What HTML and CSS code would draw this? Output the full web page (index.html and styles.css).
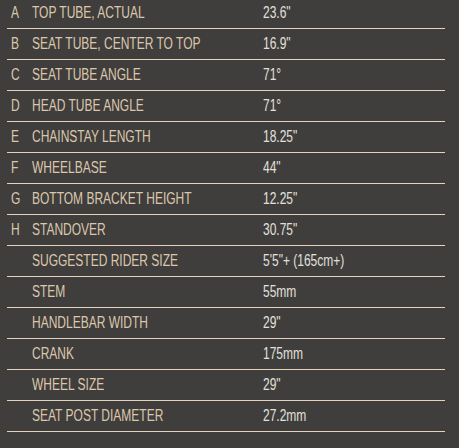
FILE: index.html
```html
<!DOCTYPE html>
<html>
<head>
<meta charset="utf-8">
<link rel="stylesheet" href="styles.css">
</head>
<body>
<div class="specs">
  <div class="row"><span class="key">A</span><span class="label">TOP TUBE, ACTUAL</span><span class="value">23.6"</span></div>
  <div class="row"><span class="key">B</span><span class="label">SEAT TUBE, CENTER TO TOP</span><span class="value">16.9"</span></div>
  <div class="row"><span class="key">C</span><span class="label">SEAT TUBE ANGLE</span><span class="value">71°</span></div>
  <div class="row"><span class="key">D</span><span class="label">HEAD TUBE ANGLE</span><span class="value">71°</span></div>
  <div class="row"><span class="key">E</span><span class="label">CHAINSTAY LENGTH</span><span class="value">18.25"</span></div>
  <div class="row"><span class="key">F</span><span class="label">WHEELBASE</span><span class="value">44"</span></div>
  <div class="row"><span class="key">G</span><span class="label">BOTTOM BRACKET HEIGHT</span><span class="value">12.25"</span></div>
  <div class="row"><span class="key">H</span><span class="label">STANDOVER</span><span class="value">30.75"</span></div>
  <div class="row"><span class="key"></span><span class="label">SUGGESTED RIDER SIZE</span><span class="value">5'5"+ (165cm+)</span></div>
  <div class="row"><span class="key"></span><span class="label">STEM</span><span class="value">55mm</span></div>
  <div class="row"><span class="key"></span><span class="label">HANDLEBAR WIDTH</span><span class="value">29"</span></div>
  <div class="row"><span class="key"></span><span class="label">CRANK</span><span class="value">175mm</span></div>
  <div class="row"><span class="key"></span><span class="label">WHEEL SIZE</span><span class="value">29"</span></div>
  <div class="row"><span class="key"></span><span class="label">SEAT POST DIAMETER</span><span class="value">27.2mm</span></div>
</div>
</body>
</html>
```
FILE: styles.css
```css
html, body {
  margin: 0;
  padding: 0;
  background: #3f3e3c;
}
body {
  font-family: "Liberation Sans", Arial, sans-serif;
  font-size: 16px;
}
.specs {
  margin: -2px 0 0 7px;
  width: 438px;
}
.row {
  display: flex;
  align-items: center;
  height: 30px;
  border-bottom: 1px solid #e3d3bf;
}
.key, .label, .value {
  display: block;
  white-space: nowrap;
  transform: scaleX(0.75);
  transform-origin: left center;
}
.key {
  flex: 0 0 21px;
  margin-left: 4px;
  color: #dcc7ad;
}
.label {
  flex: 0 0 231px;
  color: #dcc7ad;
}
.value {
  color: #e2e0dd;
}
```
